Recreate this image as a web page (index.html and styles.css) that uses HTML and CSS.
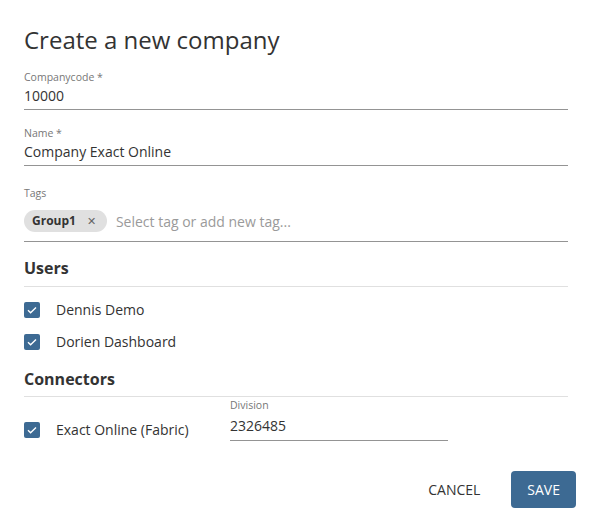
FILE: index.html
```html
<!DOCTYPE html>
<html lang="en">
<head>
    <meta charset="UTF-8">
    <meta name="viewport" content="width=device-width, initial-scale=1.0">
    <title>Create a new company</title>
    <link rel="stylesheet" href="styles.css">
</head>
<body>
    <div class="dialog">
        <h1 class="dialog-title">Create a new company</h1>

        <div class="field">
            <label class="field-label" for="company-code">Companycode *</label>
            <input class="field-input" type="text" id="company-code" value="10000">
        </div>

        <div class="field">
            <label class="field-label" for="company-name">Name *</label>
            <input class="field-input" type="text" id="company-name" value="Company Exact Online">
        </div>

        <div class="field field-tags">
            <label class="field-label" for="tag-input">Tags</label>
            <div class="tag-row">
                <span class="chip">Group1 <span class="chip-remove">&#x2715;</span></span>
                <input class="tag-input" type="text" id="tag-input" placeholder="Select tag or add new tag...">
            </div>
        </div>

        <h2 class="section-title">Users</h2>
        <div class="check-list">
            <label class="check-row">
                <span class="checkbox">
                    <svg viewBox="0 0 16 16" width="16" height="16"><path d="M4 8.2l2.6 2.6L12 5.4" fill="none" stroke="#fff" stroke-width="1.4"/></svg>
                </span>
                Dennis Demo
            </label>
            <label class="check-row">
                <span class="checkbox">
                    <svg viewBox="0 0 16 16" width="16" height="16"><path d="M4 8.2l2.6 2.6L12 5.4" fill="none" stroke="#fff" stroke-width="1.4"/></svg>
                </span>
                Dorien Dashboard
            </label>
        </div>

        <h2 class="section-title section-connectors">Connectors</h2>
        <div class="connector-row">
            <label class="check-row connector-check">
                <span class="checkbox">
                    <svg viewBox="0 0 16 16" width="16" height="16"><path d="M4 8.2l2.6 2.6L12 5.4" fill="none" stroke="#fff" stroke-width="1.4"/></svg>
                </span>
                Exact Online (Fabric)
            </label>
            <div class="field field-division">
                <label class="field-label" for="division">Division</label>
                <input class="field-input" type="text" id="division" value="2326485">
            </div>
        </div>

        <div class="dialog-actions">
            <button type="button" class="btn btn-text">Cancel</button>
            <button type="button" class="btn btn-primary">Save</button>
        </div>
    </div>
</body>
</html>
```

FILE: styles.css
```css
body {
    margin: 0;
    font-family: "Open Sans", Arial, sans-serif;
    color: #333;
    background: #fff;
}
.dialog {
    padding: 23px 21px 0 24px;
}
.dialog-title {
    margin: 0 0 14px;
    font-size: 24px;
    font-weight: 400;
    line-height: 33px;
    color: #333;
}
.field {
    display: flex;
    flex-direction: column;
    margin-bottom: 16px;
}
.field-label {
    font-size: 10.5px;
    line-height: 15px;
    color: #777;
}
.field-input {
    font-family: inherit;
    font-size: 14px;
    line-height: 20px;
    color: #333;
    border: none;
    border-bottom: 1px solid #949494;
    padding: 1px 0 3px;
    margin: 0;
    outline: none;
    background: transparent;
}
.field-tags {
    margin-top: 20px;
    margin-bottom: 15px;
}
.tag-row {
    display: flex;
    align-items: center;
    height: 40px;
    border-bottom: 1px solid #949494;
}
.chip {
    display: inline-flex;
    align-items: center;
    height: 22px;
    padding: 0 11px 0 8px;
    margin-top: -1px;
    border-radius: 11px;
    background: #e0e0e0;
    font-size: 12px;
    font-weight: 700;
    color: #333;
}
.chip-remove {
    margin-left: 11px;
    font-size: 11px;
    font-weight: 400;
    color: #666;
}
.tag-input {
    flex: 1;
    margin-left: 9px;
    border: none;
    outline: none;
    font-family: inherit;
    font-size: 14px;
    color: #333;
    padding: 0;
}
.tag-input::placeholder {
    color: #9a9a9a;
}
.section-title {
    margin: 0;
    padding-bottom: 7px;
    font-size: 16px;
    font-weight: 700;
    line-height: 22px;
    color: #333;
    border-bottom: 1px solid #e0e0e0;
}
.section-connectors {
    margin-top: 11px;
    padding-bottom: 6px;
}
.check-list {
    margin-top: 6px;
}
.check-row {
    display: flex;
    align-items: center;
    height: 32px;
    font-size: 14px;
    color: #333;
}
.checkbox {
    display: inline-flex;
    width: 16px;
    height: 16px;
    margin-right: 16px;
    border-radius: 2px;
    background: #3d6a93;
    margin-top: 2px;
}
.connector-row {
    display: flex;
    align-items: flex-end;
    margin-top: 1px;
}
.connector-check {
    width: 206px;
    height: 20px;
    margin-bottom: 2px;
}
.field-division {
    width: 218px;
    margin-bottom: 0;
}
.field-division .field-input {
    padding-top: 3px;
    padding-bottom: 4px;
}
.dialog-actions {
    display: flex;
    justify-content: flex-end;
    gap: 15px;
    margin-top: 30px;
    margin-right: -8px;
}
.btn {
    font-family: inherit;
    font-size: 14px;
    text-transform: uppercase;
    height: 37px;
    padding: 0 16px;
    border: none;
    border-radius: 4px;
    cursor: pointer;
}
.btn-text {
    background: transparent;
    color: #333;
}
.btn-primary {
    background: #3d6a93;
    color: #fff;
}
```
